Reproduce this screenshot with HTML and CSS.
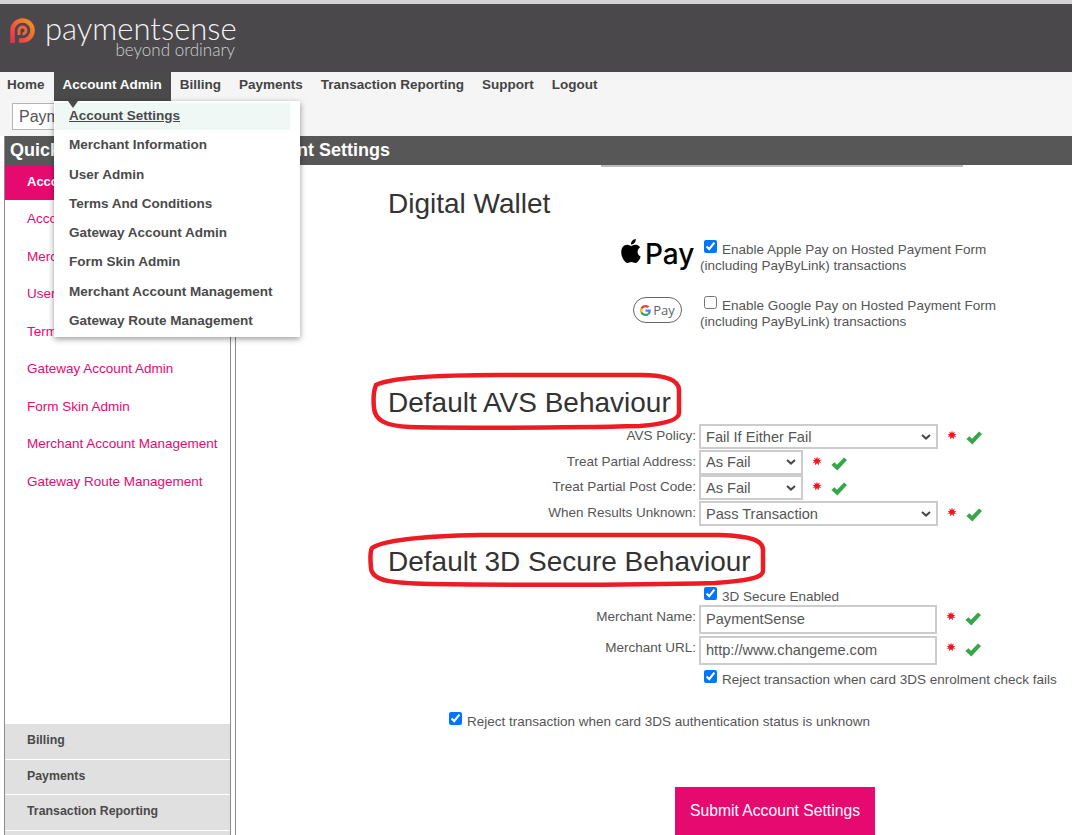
FILE: index.html
```html
<!DOCTYPE html>
<html lang="en">
<head>
<meta charset="utf-8">
<title>Account Settings</title>
<link rel="stylesheet" href="styles.css">
</head>
<body>
<div class="page">
  <header class="brand">
    <svg class="brand-mark" viewBox="0 0 26 26" width="26" height="26">
      <defs><linearGradient id="pg" x1="0" y1="1" x2="1" y2="0"><stop offset="0" stop-color="#ee2a55"/><stop offset="1" stop-color="#f7931e"/></linearGradient></defs>
      <path d="M2.5 25V12.5A10 10 0 1 1 12.5 22.5H9" fill="none" stroke="url(#pg)" stroke-width="4.5"/>
      <path d="M9 17V12.5A3.5 3.5 0 1 1 12.5 16" fill="none" stroke="#f0613f" stroke-width="3"/>
    </svg>
    <div class="brand-words">
      <div class="brand-name">paymentsense</div>
      <div class="brand-tag">beyond ordinary</div>
    </div>
  </header>
  <nav class="topnav">
    <a class="topnav-item">Home</a>
    <a class="topnav-item is-active">Account Admin</a>
    <a class="topnav-item">Billing</a>
    <a class="topnav-item">Payments</a>
    <a class="topnav-item">Transaction Reporting</a>
    <a class="topnav-item">Support</a>
    <a class="topnav-item">Logout</a>
  </nav>
  <div class="toolbar">
    <div class="account-box">PaymentSense</div>
  </div>
  <main class="workspace">
    <aside class="sidebar">
      <h2 class="panel-title">Quick Links</h2>
      <div class="side-current">Account Admin</div>
      <ul class="side-links">
        <li>Account Settings</li>
        <li>Merchant Information</li>
        <li>User Admin</li>
        <li>Terms And Conditions</li>
        <li>Gateway Account Admin</li>
        <li>Form Skin Admin</li>
        <li>Merchant Account Management</li>
        <li>Gateway Route Management</li>
      </ul>
      <div class="side-group">Billing</div>
      <div class="side-group">Payments</div>
      <div class="side-group">Transaction Reporting</div>
      <div class="side-group">Support</div>
    </aside>
    <section class="content">
      <h2 class="panel-title content-title">Account Settings</h2>
      <div class="form">
        <div class="cut-field"></div>
        <h3 class="heading wallet-heading">Digital Wallet</h3>
        <div class="wallet wallet-apple">
          <div class="wallet-logo">
            <svg class="apple-icon" viewBox="0 0 24 24" width="24" height="24"><path d="M12.152 6.896c-.948 0-2.415-1.078-3.96-1.04-2.04.027-3.91 1.183-4.961 3.014-2.117 3.675-.546 9.103 1.519 12.09 1.013 1.454 2.208 3.09 3.792 3.039 1.52-.065 2.09-.987 3.935-.987 1.831 0 2.35.987 3.96.948 1.637-.026 2.676-1.48 3.676-2.948 1.156-1.688 1.636-3.325 1.662-3.415-.039-.013-3.182-1.221-3.22-4.857-.026-3.04 2.48-4.494 2.597-4.559-1.429-2.09-3.623-2.324-4.39-2.376-2-.156-3.675 1.09-4.61 1.09zM15.53 3.83c.843-1.012 1.4-2.427 1.245-3.83-1.207.052-2.662.805-3.532 1.818-.78.896-1.454 2.338-1.273 3.714 1.338.104 2.715-.688 3.559-1.701"/></svg>
            <span class="apple-pay">Pay</span>
          </div>
          <label class="wallet-text"><input class="check" type="checkbox" checked>Enable Apple Pay on Hosted Payment Form<br>(including PayByLink) transactions</label>
        </div>
        <div class="wallet wallet-google">
          <div class="wallet-logo">
            <div class="gpay">
              <svg viewBox="0 0 48 48" width="11" height="11">
                <path fill="#EA4335" d="M24 9.5c3.54 0 6.71 1.22 9.21 3.6l6.85-6.85C35.9 2.38 30.47 0 24 0 14.62 0 6.51 5.38 2.56 13.22l7.98 6.19C12.43 13.72 17.74 9.5 24 9.5z"/>
                <path fill="#4285F4" d="M46.98 24.55c0-1.57-.15-3.09-.38-4.55H24v9.02h12.94c-.58 2.96-2.26 5.48-4.78 7.18l7.73 6c4.51-4.18 7.09-10.36 7.09-17.65z"/>
                <path fill="#FBBC05" d="M10.53 28.59c-.48-1.45-.76-2.99-.76-4.59s.27-3.14.76-4.59l-7.98-6.19C.92 16.46 0 20.12 0 24c0 3.88.92 7.54 2.56 10.78l7.97-6.19z"/>
                <path fill="#34A853" d="M24 48c6.48 0 11.93-2.13 15.89-5.81l-7.73-6c-2.15 1.45-4.92 2.3-8.16 2.3-6.26 0-11.57-4.22-13.47-9.91l-7.98 6.19C6.51 42.62 14.62 48 24 48z"/>
              </svg>
              <span>Pay</span>
            </div>
          </div>
          <label class="wallet-text"><input class="check" type="checkbox">Enable Google Pay on Hosted Payment Form<br>(including PayByLink) transactions</label>
        </div>

        <h3 class="heading avs-heading">Default AVS Behaviour</h3>
        <div class="row row-select">
          <label class="row-label">AVS Policy:</label>
          <select class="field field-select field-wide"><option>Fail If Either Fail</option></select>
          <svg class="star" viewBox="0 0 10 10" width="10" height="10"><use href="#star"/></svg>
          <svg class="tick" viewBox="0 0 16 14" width="16" height="14"><use href="#tick"/></svg>
        </div>
        <div class="row row-select">
          <label class="row-label">Treat Partial Address:</label>
          <select class="field field-select field-narrow"><option>As Fail</option></select>
          <svg class="star" viewBox="0 0 10 10" width="10" height="10"><use href="#star"/></svg>
          <svg class="tick" viewBox="0 0 16 14" width="16" height="14"><use href="#tick"/></svg>
        </div>
        <div class="row row-select">
          <label class="row-label">Treat Partial Post Code:</label>
          <select class="field field-select field-narrow"><option>As Fail</option></select>
          <svg class="star" viewBox="0 0 10 10" width="10" height="10"><use href="#star"/></svg>
          <svg class="tick" viewBox="0 0 16 14" width="16" height="14"><use href="#tick"/></svg>
        </div>
        <div class="row row-select">
          <label class="row-label">When Results Unknown:</label>
          <select class="field field-select field-wide"><option>Pass Transaction</option></select>
          <svg class="star" viewBox="0 0 10 10" width="10" height="10"><use href="#star"/></svg>
          <svg class="tick" viewBox="0 0 16 14" width="16" height="14"><use href="#tick"/></svg>
        </div>

        <h3 class="heading secure-heading">Default 3D Secure Behaviour</h3>
        <label class="check-row"><input class="check" type="checkbox" checked>3D Secure Enabled</label>
        <div class="row row-input">
          <label class="row-label">Merchant Name:</label>
          <input class="field field-text" type="text" value="PaymentSense">
          <svg class="star" viewBox="0 0 10 10" width="10" height="10"><use href="#star"/></svg>
          <svg class="tick" viewBox="0 0 16 14" width="16" height="14"><use href="#tick"/></svg>
        </div>
        <div class="row row-input">
          <label class="row-label">Merchant URL:</label>
          <input class="field field-text" type="text" value="http://www.changeme.com">
          <svg class="star" viewBox="0 0 10 10" width="10" height="10"><use href="#star"/></svg>
          <svg class="tick" viewBox="0 0 16 14" width="16" height="14"><use href="#tick"/></svg>
        </div>
        <label class="check-row check-row-enrol"><input class="check" type="checkbox" checked>Reject transaction when card 3DS enrolment check fails</label>
        <label class="check-row check-row-far"><input class="check" type="checkbox" checked>Reject transaction when card 3DS authentication status is unknown</label>
        <div class="submit-wrap"><button class="submit" type="button">Submit Account Settings</button></div>
      </div>
    </section>
  </main>

  <div class="dropdown">
    <span class="dropdown-arrow"></span>
    <a class="dropdown-item is-current">Account Settings</a>
    <a class="dropdown-item">Merchant Information</a>
    <a class="dropdown-item">User Admin</a>
    <a class="dropdown-item">Terms And Conditions</a>
    <a class="dropdown-item">Gateway Account Admin</a>
    <a class="dropdown-item">Form Skin Admin</a>
    <a class="dropdown-item">Merchant Account Management</a>
    <a class="dropdown-item">Gateway Route Management</a>
  </div>

  <svg class="markup" viewBox="0 0 1072 835" width="1072" height="835">
    <path d="M376 385C392 377 440 375 500 375L640 375C665 375 679 380 679 390L679 413C679 420 665 424 640 426C560 428 450 428 410 427C385 426 375 420 374 408C373 398 374 390 376 385Z"/>
    <path d="M372 548C385 539 430 536 480 535L720 535C750 536 763 540 763 550L763 571C763 578 745 581 715 583C640 585 520 585 430 584C395 583 372 582 371 568C370 558 370 552 372 548Z"/>
  </svg>

  <svg class="defs" width="0" height="0">
    <defs>
      <g id="star"><path d="M5 0.5L5.8 3 7.9 1.4 7 3.9 9.6 3.9 7.5 5.2 9.4 6.9 6.8 6.5 6.9 9.2 5 7.3 3.1 9.2 3.2 6.5 0.6 6.9 2.5 5.2 0.4 3.9 3 3.9 2.1 1.4 4.2 3Z" fill="#f3141c"/></g>
      <g id="tick"><path d="M0.4 8L3.4 5.2 6 7.8 13 0.4 16 3 6.4 13.6Z" fill="#37a64a"/></g>
    </defs>
  </svg>
</div>
</body>
</html>
```
FILE: styles.css
```css
* { box-sizing: border-box; }
html, body { margin: 0; padding: 0; }
body { font-family: "Liberation Sans", Arial, sans-serif; font-size: 13.5px; color: #555; background: #fff; }
.page { position: relative; width: 1072px; height: 835px; overflow: hidden; display: flex; flex-direction: column; }

.brand { height: 72px; flex: none; border-top: 4px solid #d4d4d4; background: #4a484b; display: flex; padding: 14px 0 0 10px; gap: 9px; }
.brand-words { width: 190px; color: #f2f2f2; font-family: Lato, sans-serif; font-weight: 300; }
.brand-name { font-size: 31px; line-height: 22px; margin-top: -1px; }
.brand-tag { font-size: 17px; line-height: 18px; margin-top: 2px; text-align: right; color: #d0d0d0; }

.topnav { height: 29px; flex: none; background: #f5f5f5; display: flex; }
.topnav-item { padding: 0 9px; font-weight: 700; line-height: 26px; color: #444; }
.topnav-item:first-child { padding-left: 7px; }
.topnav-item.is-active { background: #4a4a4a; color: #fff; }

.toolbar { height: 35px; flex: none; background: #f5f5f5; padding: 2px 0 0 12px; }
.account-box { width: 200px; height: 27px; border: 1px solid #b5b5b5; background: #fff; padding-left: 6px; font-size: 16px; line-height: 25px; color: #555; }

.workspace { flex: 1; display: flex; align-items: flex-start; gap: 4px; padding-left: 4px; min-height: 0; }
.panel-title { margin: 0; height: 29px; background: #575757; color: #fff; font-size: 18px; font-weight: 700; line-height: 29px; padding-left: 5px; }

.sidebar { width: 227px; height: 730px; flex: none; display: flex; flex-direction: column; border-left: 1px solid #8c8c8c; border-right: 1px solid #8c8c8c; }
.side-current { height: 35px; background: #e6096f; color: #fff; font-size: 13px; font-weight: 700; line-height: 33px; padding-left: 22px; }
.side-links { list-style: none; margin: 0; padding: 0; flex: 1; }
.side-links li { height: 37.5px; line-height: 37.5px; padding-left: 22px; color: #e6096f; }
.side-group { height: 35.5px; flex: none; background: #e0e0e0; border-bottom: 1px solid #fff; color: #4a4a4a; font-size: 12.35px; font-weight: 700; line-height: 32px; padding-left: 22px; }

.content { flex: 1; min-width: 0; height: 100%; border-left: 1px solid #8c8c8c; }
.content-title { padding-left: 6px; }
.form { padding-left: 152px; position: relative; }
.cut-field { margin-left: 213px; width: 362px; height: 2px; background: #bbb; }
.heading { margin: 0; font-size: 28px; font-weight: 400; line-height: 30px; color: #333; }
.wallet-heading { margin-top: 22px; }

.wallet { display: flex; }
.wallet-apple { margin-top: 21px; height: 32px; }
.wallet-google { margin-top: 24px; height: 32px; }
.wallet-logo { width: 312px; flex: none; position: relative; }
.apple-icon { position: absolute; left: 231px; top: -1px; }
.apple-pay { position: absolute; left: 257px; top: -4px; font-family: Inter, sans-serif; font-size: 28px; line-height: 36px; font-weight: 500; color: #000; }
.gpay { position: absolute; left: 245px; top: 1px; width: 49px; height: 26px; border: 1.5px solid #666; border-radius: 13px; background: #fff; display: flex; align-items: center; justify-content: center; gap: 2px; font-family: "Open Sans", sans-serif; font-size: 13px; color: #5f6368; }
.wallet-text { display: block; line-height: 16px; white-space: nowrap; }
.check { width: 13px; height: 13px; margin: 0 5px 0 4px; vertical-align: 1px; }

.avs-heading { margin-top: 60px; margin-bottom: 6px; }
.row { display: flex; align-items: flex-start; }
.row-select { height: 25.7px; }
.row-input { height: 31px; }
.row-label { width: 311px; flex: none; text-align: right; line-height: 24px; padding-right: 3px; }
.field { font-family: "Liberation Sans", Arial, sans-serif; font-size: 14.6px; color: #555; background: #fff; border: 2px solid #ccc; padding: 0 0 0 5px; border-radius: 0; }
.field-select { appearance: none; background: #fff url("data:image/svg+xml,%3Csvg xmlns='http://www.w3.org/2000/svg' width='10' height='6'%3E%3Cpath d='M1 1l4 3.6L9 1' fill='none' stroke='%23484848' stroke-width='2'/%3E%3C/svg%3E") no-repeat right 5px center; line-height: 20px; }
.field-wide { width: 239px; height: 25px; }
.field-narrow { width: 104px; height: 25px; }
.field-text { width: 238px; height: 29px; }
.star { flex: none; margin: 6px 0 0 9px; }
.tick { flex: none; margin: 7px 0 0 9px; }

.secure-heading { margin-top: 20px; margin-bottom: 10px; }
.check-row { display: block; margin-left: 311px; line-height: 16px; white-space: nowrap; }
.check-row .check { margin-left: 5px; }
.check-row-enrol { margin-top: 3px; }
.check-row-far { margin-left: 56px; margin-top: 24px; }
.submit-wrap { margin-left: 287px; margin-top: 57px; }
.submit { width: 200px; height: 48px; border: 0; background: #e6096f; color: #fff; font-family: "Liberation Sans", Arial, sans-serif; font-size: 15.7px; padding: 0; }

.dropdown { position: absolute; left: 54px; top: 101px; width: 246px; height: 236px; background: #fff; box-shadow: 0 2px 6px rgba(0,0,0,.4); padding-top: 2px; }
.dropdown-arrow { position: absolute; left: 14px; top: 0; border-left: 5px solid transparent; border-right: 5px solid transparent; border-top: 7px solid #4a4a4a; }
.dropdown-item { display: block; height: 29.3px; line-height: 25px; padding-left: 15px; font-weight: 700; color: #4a4a4a; }
.dropdown-item.is-current { width: 235px; height: 27px; margin-left: 1px; padding-left: 14px; margin-bottom: 2.3px; background: #f0f8f6; text-decoration: underline; }

.markup { position: absolute; left: 0; top: 0; pointer-events: none; }
.markup path { fill: none; stroke: #ed1c24; stroke-width: 4.5; }
.defs { position: absolute; }
```
